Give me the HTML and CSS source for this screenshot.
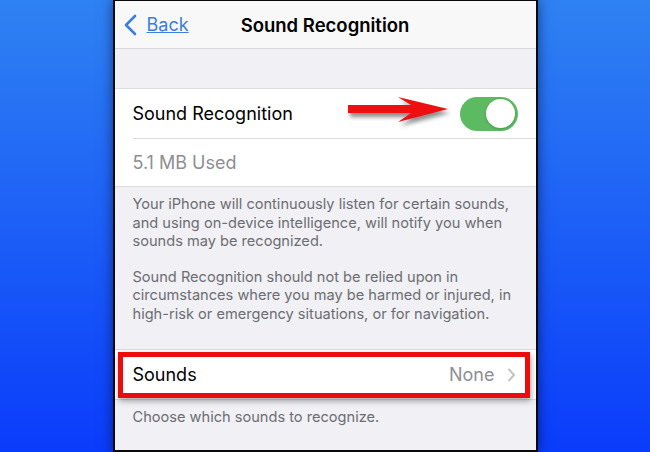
FILE: index.html
```html
<!DOCTYPE html>
<html lang="en">

<head>
    <meta charset="UTF-8">
    <meta name="viewport" content="width=device-width, initial-scale=1.0">
    <title>Sound Recognition</title>
    <link rel="stylesheet" href="styles.css">
</head>

<body>
    <div class="telefono">
        <!-- Barra de navegación -->
        <header class="barra">
            <a class="volver" href="#">
                <svg class="chevron-izq" width="14" height="22" viewBox="0 0 14 22">
                    <polyline points="11,2 2,11 11,20" />
                </svg>
                <span>Back</span>
            </a>
            <h1>Sound Recognition</h1>
            <span></span>
        </header>

        <div class="separador"></div>

        <section class="grupo">
            <div class="celda">
                <span>Sound Recognition</span>
                <div class="interruptor"><div class="perilla"></div></div>
                <svg class="flecha" width="120" height="44" viewBox="0 0 120 44">
                    <polygon points="7,14 70,14 57,6 107,18 57,31 70,22 7,22" />
                </svg>
            </div>
            <div class="celda apagada">5.1 MB Used</div>
        </section>

        <div class="nota nota-larga">
            <p>Your iPhone will continuously listen for certain sounds, and using on-device intelligence, will notify you when sounds may be recognized.</p>
            <p>Sound Recognition should not be relied upon in circumstances where you may be harmed or injured, in high-risk or emergency situations, or for navigation.</p>
        </div>

        <section class="grupo">
            <div class="celda marcada">
                <span>Sounds</span>
                <span class="valor">None
                    <svg class="chevron-der" width="9" height="14" viewBox="0 0 9 14">
                        <polyline points="2,1.5 7,7 2,12.5" />
                    </svg>
                </span>
            </div>
        </section>

        <div class="nota">
            <p>Choose which sounds to recognize.</p>
        </div>
    </div>
</body>
</html>
```

FILE: styles.css
```css
* {
    margin: 0;
    padding: 0;
    box-sizing: border-box;
    font-family: Inter, 'Noto Sans', sans-serif;
}

body {
    background: linear-gradient(#2f82f2, #0a3cfb);
    display: flex;
    justify-content: center;
    height: 452px;
    overflow: hidden;
}

.telefono {
    width: 425px;
    height: 452px;
    background: #f0f0f5;
    border: 2px solid #0a0a0a;
    border-top-width: 1px;
    box-shadow: 0 0 12px rgba(0, 0, 40, 0.55);
    display: flex;
    flex-direction: column;
}

.barra {
    height: 48px;
    background: #f8f8f8;
    border-bottom: 1px solid #d9d9dc;
    display: grid;
    grid-template-columns: 1fr auto 1fr;
    align-items: center;
}

.volver {
    display: flex;
    align-items: center;
    gap: 9px;
    padding-left: 9px;
    color: #3b7de0;
    font-size: 18px;
}

.chevron-izq polyline {
    fill: none;
    stroke: #3b7de0;
    stroke-width: 2.6;
    stroke-linecap: round;
    stroke-linejoin: round;
}

.barra h1 {
    font-size: 18.5px;
    font-weight: 600;
    color: #000;
}

.separador {
    height: 39px;
}

.grupo {
    background: #fff;
    border-top: 1px solid #dcdce0;
    border-bottom: 1px solid #dcdce0;
    padding-left: 18px;
}

.celda {
    position: relative;
    height: 49px;
    display: flex;
    align-items: center;
    justify-content: space-between;
    padding-right: 18px;
    font-size: 18px;
    color: #000;
}

.celda + .celda {
    border-top: 1px solid #dcdce0;
    height: 48px;
}

.apagada {
    color: #8e8e93;
}

.interruptor {
    width: 58px;
    height: 34px;
    border-radius: 17px;
    background: #5cbb62;
    display: flex;
    justify-content: flex-end;
    align-items: center;
    padding-right: 3px;
}

.perilla {
    width: 29px;
    height: 29px;
    border-radius: 50%;
    background: #fff;
    box-shadow: 0 1px 3px rgba(0, 0, 0, 0.2);
}

/* anotación roja */
.flecha {
    position: absolute;
    left: 208px;
    top: 2px;
    filter: drop-shadow(2px 4px 2px rgba(0, 0, 0, 0.45));
}

.flecha polygon {
    fill: #ee0f10;
}

.nota {
    padding: 8px 18px 0;
    color: #6d6d72;
    font-size: 14.6px;
    line-height: 18.5px;
}

.nota-larga {
    height: 162px;
}

.nota p + p {
    margin-top: 17px;
}

.marcada::after {
    content: "";
    position: absolute;
    left: -15px;
    right: 6px;
    top: 2px;
    bottom: 1px;
    border: 5px solid #ec0c0c;
    box-shadow: 1px 3px 6px rgba(0, 0, 0, 0.35);
}

.valor {
    display: flex;
    align-items: center;
    gap: 12px;
    color: #8e8e93;
    padding-right: 2px;
}

.chevron-der polyline {
    fill: none;
    stroke: #c4c4c8;
    stroke-width: 2;
    stroke-linecap: round;
    stroke-linejoin: round;
}
```
